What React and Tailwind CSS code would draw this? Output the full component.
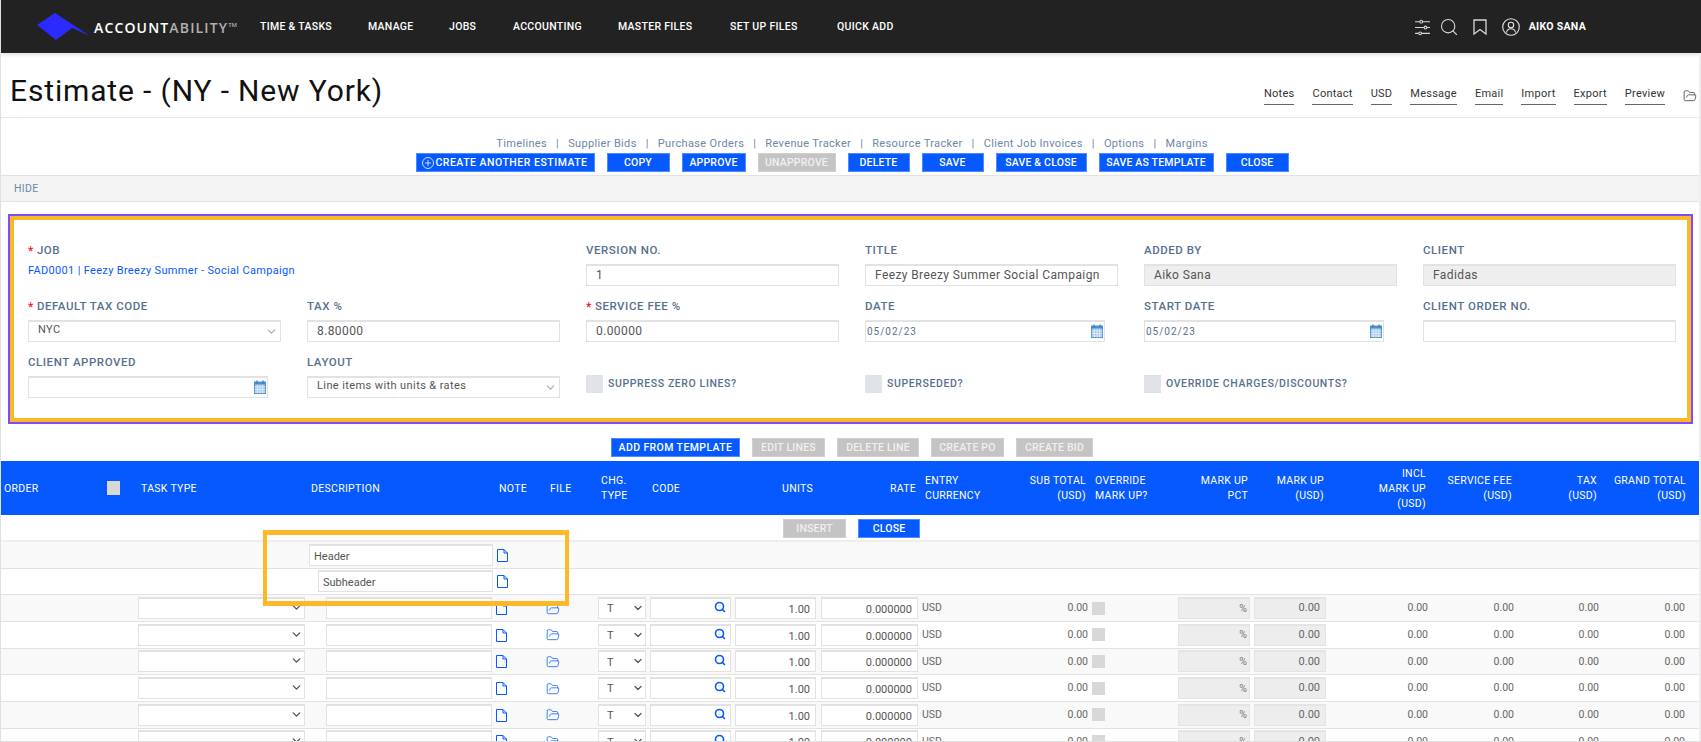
import { ChevronDown, FolderOpen, Search } from "lucide-react"

const navItems = [
  ["TIME & TASKS", "w-[108px]"],
  ["MANAGE", "w-[81px]"],
  ["JOBS", "w-[64px]"],
  ["ACCOUNTING", "w-[105px]"],
  ["MASTER FILES", "w-[112px]"],
  ["SET UP FILES", "w-[107px]"],
  ["QUICK ADD", "w-[70px]"],
]
const pageLinks = ["Notes", "Contact", "USD", "Message", "Email", "Import", "Export", "Preview"]
const subLinks = ["Timelines", "Supplier Bids", "Purchase Orders", "Revenue Tracker", "Resource Tracker", "Client Job Invoices", "Options", "Margins"]

const gridCols = "grid grid-cols-[106px_31px_171px_185px_52px_52px_52px_85px_85px_100px_70px_100px_88px_74px_76px_102px_86px_84px_99px]"

const Logo = () => (
  <svg viewBox="0 0 54 28" className="w-[54px] h-[28px] flex-none">
    <polygon points="0,12 18,0 53,23 35,15 19,27" fill="#2b2bff" />
  </svg>
)

const Sliders = () => (
  <svg viewBox="0 0 16 16" className="w-[17px] h-[17px]" fill="none" stroke="#d8d8d8" strokeWidth="1">
    <path d="M1 2.500h4.500M8 2.500h7M1 8h8.500M12 8h3M1 13.500h3.500M7 13.500h8" />
    <circle cx="6.800" cy="2.500" r="1.300" />
    <circle cx="10.800" cy="8" r="1.300" />
    <circle cx="5.800" cy="13.500" r="1.300" />
  </svg>
)

const Bookmark = () => (
  <svg viewBox="0 0 16 16" className="w-[16px] h-[16px]" fill="none" stroke="#d8d8d8" strokeWidth="1.300">
    <path d="M2 1h12v14l-6-4.500L2 15z" />
  </svg>
)

const UserCircle = () => (
  <svg viewBox="0 0 18 18" className="w-[18px] h-[18px]" fill="none" stroke="#e4e4e4" strokeWidth="1.100">
    <circle cx="9" cy="9" r="8.300" />
    <circle cx="9" cy="7" r="2.700" />
    <path d="M4.500 14.500c.4-2.600 2-3.800 4.500-3.800s4.100 1.200 4.500 3.800" />
  </svg>
)

const CalendarIcon = () => (
  <svg viewBox="0 0 12 14" className="w-[12px] h-[14px] block">
    <rect x="0.500" y="2" width="11" height="11.500" fill="#9cc3ea" stroke="#4a90d2" />
    <rect x="0.500" y="2" width="11" height="2.500" fill="#4a90d2" />
    <path d="M3 0.500v3M9 0.500v3" stroke="#3c78b4" strokeWidth="1.200" />
    <path d="M0.500 7h11M0.500 9.500h11M0.500 12h11M3.300 4.500v9M6 4.500v9M8.700 4.500v9" stroke="#fff" strokeWidth="0.600" />
  </svg>
)

const NoteIcon = () => (
  <svg viewBox="0 0 11 13" className="w-[11px] h-[13px] mt-[1px]" fill="none" stroke="#0559ff" strokeWidth="1">
    <path d="M0.500 0.500h6.500l3.500 3.500v8.500h-10zM7 0.500v3.500h3.500" />
  </svg>
)

const Btn = ({ children, w, off }) => (
  <button className={`${w} h-[19px] flex-none flex items-center justify-center text-[10.5px] font-medium tracking-[0.2px] border ${off ? "bg-[#c4c4c4] border-[#d0d0d0] text-[#f0f0f0]" : "bg-[#0559ff] border-[#4f8aff] text-white"}`}>
    {children}
  </button>
)

const Label = ({ children, req }) => (
  <div className="h-[16px] pt-[1px] flex items-center text-[11.5px] font-medium tracking-[0.55px] text-[#58708f]">
    {req && <span className="text-[#ee1c25] mr-[3px] text-[12px]">*</span>}
    {children}
  </div>
)

// block so padding moves the text and not the whole box
const boxCls = "block h-[22px] border border-[#e2e2e2] border-t-2 bg-white px-[9px] text-[11px] text-[#555] outline-none"
const cellCls = `${boxCls} pt-[2px]`

const Field = ({ label, req, value, gray, w = "w-[253px]" }) => (
  <div>
    <Label req={req}>{label}</Label>
    <input
      readOnly
      defaultValue={value}
      className={`mt-[6px] ${w} ${boxCls} pb-[2px] !text-[12px] tracking-[0.4px] ${gray ? "!bg-[#eeeeee]" : ""}`}
    />
  </div>
)

const SelectField = ({ label, req, value }) => (
  <div>
    <Label req={req}>{label}</Label>
    <div className="relative mt-[6px] w-[253px]">
      <select className={`w-full appearance-none ${boxCls} pb-[2px] tracking-[0.4px]`} defaultValue={value}>
        <option>{value}</option>
      </select>
      <ChevronDown className="absolute right-[3px] top-[5px] w-[13px] h-[13px] text-[#aaa]" />
    </div>
  </div>
)

const DateField = ({ label, value }) => (
  <div>
    <Label>{label}</Label>
    <div className="relative mt-[6px] w-[240px]">
      <input readOnly defaultValue={value} className={`w-full ${boxCls} pb-[1px] !px-[1px] !text-[10px] tracking-[1px] !text-[#58708f]`} />
      <span className="absolute right-[2px] top-[4px]"><CalendarIcon /></span>
    </div>
  </div>
)

const CheckField = ({ label }) => (
  <div className="pt-[21px] flex items-start gap-[5px]">
    <span className="w-[17px] h-[18px] bg-[#e0e4e9] flex-none" />
    <span className="h-[18px] flex items-center text-[10.5px] font-medium tracking-[0.6px] text-[#58708f]">{label}</span>
  </div>
)

const HeadCell = ({ lines, right, className = "" }) => (
  <div className={`flex flex-col justify-center leading-[15px] ${right ? "items-end" : "items-start"} ${className}`}>
    {lines.map((l) => <span key={l} className="whitespace-nowrap">{l}</span>)}
  </div>
)

const Amount = ({ className = "" }) => (
  <div className={`flex items-center justify-end text-[10.5px] text-[#666] ${className}`}>0.00</div>
)

const LineRow = ({ odd }) => (
  <div className={`${gridCols} h-[26.67px] border-b border-[#e2e2e2] items-center ${odd ? "bg-[#f9f9f9]" : "bg-white"}`}>
    <div />
    <div />
    <div className="relative w-[167px]">
      <select className={`w-full appearance-none ${cellCls}`}><option></option></select>
      <ChevronDown className="absolute right-[2px] top-[4px] w-[13px] h-[13px] text-[#555]" strokeWidth={2.5} />
    </div>
    <input readOnly className={`ml-[17px] w-[166px] ${cellCls}`} />
    <div className="pl-[2px] flex"><NoteIcon /></div>
    <div className="flex"><FolderOpen className="mt-[1px] w-[14px] h-[14px] text-[#0559ff]" strokeWidth={1.3} /></div>
    <div className="relative w-[48px]">
      <select className={`w-full appearance-none ${cellCls} !px-[8px]`}><option>T</option></select>
      <ChevronDown className="absolute right-[2px] top-[5px] w-[12px] h-[12px] text-[#555]" strokeWidth={2.5} />
    </div>
    <div className="relative w-[81px]">
      <input readOnly className={`w-full ${cellCls}`} />
      <Search className="absolute right-[5px] top-[4px] w-[12px] h-[12px] text-[#0559ff]" strokeWidth={3.2} />
    </div>
    <input readOnly defaultValue="1.00" className={`w-[81px] text-right ${cellCls} !pr-[5px]`} />
    <input readOnly defaultValue="0.000000" className={`ml-[1px] w-[97px] text-right ${cellCls} !pr-[5px]`} />
    <div className="pl-[2px] text-[10.5px] text-[#666]">USD</div>
    <Amount className="pr-[2px]" />
    <div className="pl-[2px]"><div className="w-[13px] h-[13px] bg-[#d8d8d8]" /></div>
    <div className="w-[72px] h-[22px] bg-[#ededed] border border-[#e4e4e4] border-t-2 flex items-center justify-end pr-[2px] text-[10.5px] text-[#777]">%</div>
    <div className="ml-[2px] w-[72px] h-[22px] bg-[#ededed] border border-[#e4e4e4] border-t-2 flex items-center justify-end pr-[5px] text-[11px] text-[#666]">0.00</div>
    <Amount className="pr-[2px]" />
    <Amount className="pr-[2px]" />
    <Amount className="pr-[1px]" />
    <Amount className="pr-[14px]" />
  </div>
)

const App = () => {
  return (
    <div className="relative w-[1701px] h-[742px] overflow-hidden bg-white border-l border-b border-[#e0e0e0] pr-[2px] font-['Roboto','Noto_Sans',sans-serif]">
      {/* Top nav */}
      <div className="h-[53px] w-[1700px] bg-[#222222] flex items-center pl-[36px] pt-[1px] shadow-[0_2px_4px_rgba(0,0,0,0.12)] text-white">
        <Logo />
        <div className="ml-[3px] w-[166px] flex-none font-['Open_Sans',sans-serif] font-semibold text-[14px] tracking-[1.15px] whitespace-nowrap">
          ACCOUNT<span className="text-[#b0b0b0]">ABILITY</span><span className="text-[6px] align-[6px] tracking-normal text-[#b0b0b0]">TM</span>
        </div>
        {navItems.map(([name, w]) => (
          <div key={name} className={`${w} flex-none text-[10.5px] font-medium tracking-[0.3px] whitespace-nowrap`}>{name}</div>
        ))}
        <div className="ml-auto flex items-center pr-[115px]">
          <Sliders />
          <Search className="ml-[8px] w-[20px] h-[20px] text-[#d8d8d8]" strokeWidth={1.3} />
          <span className="ml-[13px]"><Bookmark /></span>
          <span className="ml-[14px]"><UserCircle /></span>
          <span className="ml-[9px] text-[10.5px] font-bold tracking-[0.3px]">AIKO SANA</span>
        </div>
      </div>

      {/* Title */}
      <div className="h-[65px] border-b border-[#e6e6e6] flex items-center pl-[9px] pt-[10px]">
        <h1 className="text-[30px] tracking-[0.85px] text-[#111] font-normal">Estimate - (NY - New York)</h1>
        <div className="ml-auto flex items-center gap-[18px] pr-[2px] pt-[11px]">
          {pageLinks.map((l) => (
            <span key={l} className="text-[11px] tracking-[0.25px] text-[#333] border-b border-[#666] pb-[3px] leading-[14px]">{l}</span>
          ))}
          <FolderOpen className="w-[14px] h-[14px] text-[#444]" strokeWidth={1.4} />
        </div>
      </div>

      {/* Links and actions */}
      <div className="h-[57px] pt-[18px] pl-[4px]">
        <div className="h-[16px] flex items-center justify-center text-[11px] tracking-[0.35px] text-[#6d86a8]">
          {subLinks.map((l, i) => (
            <span key={l} className="flex items-center">
              {i > 0 && <span className="mx-[9px] text-[#6d86a8]">|</span>}
              {l}
            </span>
          ))}
        </div>
        <div className="mt-[1px] flex justify-center gap-[12px]">
          <Btn w="w-[179px]">
            <svg viewBox="0 0 12 12" className="w-[12px] h-[12px] mr-[1px]" fill="none" stroke="#fff" strokeWidth="0.800">
              <circle cx="6" cy="6" r="5.500" />
              <path d="M6 3v6M3 6h6" />
            </svg>
            <span className="tracking-[0.5px]">CREATE ANOTHER ESTIMATE</span>
          </Btn>
          <Btn w="w-[63px]">COPY</Btn>
          <Btn w="w-[64px]">APPROVE</Btn>
          <Btn w="w-[78px]" off>UNAPPROVE</Btn>
          <Btn w="w-[62px]">DELETE</Btn>
          <Btn w="w-[62px]">SAVE</Btn>
          <Btn w="w-[91px]">SAVE &amp; CLOSE</Btn>
          <Btn w="w-[115px]">SAVE AS TEMPLATE</Btn>
          <Btn w="w-[63px]">CLOSE</Btn>
        </div>
      </div>

      {/* Hide bar */}
      <div className="h-[27px] bg-[#f4f4f4] border-y border-[#e2e2e2] flex items-center pl-[13px] pt-[1px] text-[10.5px] tracking-[0.3px] text-[#6d86a8]">HIDE</div>

      {/* Highlighted form */}
      <div className="mt-[12px] ml-[7px] w-[1685px] h-[210px] border-2 border-[#7c4dff]">
        <div className="h-full border-[4px] border-[#fdb827] pl-[14px] pt-[22px]">
          <div className="grid grid-cols-[repeat(6,279px)] grid-rows-[repeat(3,56px)]">
            <div className="col-span-2">
              <Label req>JOB</Label>
              <div className="mt-[7px] text-[11px] leading-[12px] tracking-[0.33px] text-[#0559ff]">FAD0001 | Feezy Breezy Summer - Social Campaign</div>
            </div>
            <Field label="VERSION NO." value="1" />
            <Field label="TITLE" value="Feezy Breezy Summer Social Campaign" />
            <Field label="ADDED BY" value="Aiko Sana" gray />
            <Field label="CLIENT" value="Fadidas" gray />

            <SelectField label="DEFAULT TAX CODE" value="NYC" req />
            <Field label="TAX %" value="8.80000" />
            <Field label="SERVICE FEE %" value="0.00000" req />
            <DateField label="DATE" value="05/02/23" />
            <DateField label="START DATE" value="05/02/23" />
            <Field label="CLIENT ORDER NO." value="" />

            <DateField label="CLIENT APPROVED" value="" />
            <SelectField label="LAYOUT" value="Line items with units & rates" />
            <CheckField label="SUPPRESS ZERO LINES?" />
            <CheckField label="SUPERSEDED?" />
            <CheckField label="OVERRIDE CHARGES/DISCOUNTS?" />
          </div>
        </div>
      </div>

      {/* Line actions */}
      <div className="mt-[14px] h-[19px] flex justify-center gap-[12px] pl-[4px]">
        <Btn w="w-[129px]"><span className="tracking-[0.4px]">ADD FROM TEMPLATE</span></Btn>
        <Btn w="w-[73px]" off>EDIT LINES</Btn>
        <Btn w="w-[82px]" off>DELETE LINE</Btn>
        <Btn w="w-[73px]" off>CREATE PO</Btn>
        <Btn w="w-[77px]" off>CREATE BID</Btn>
      </div>

      {/* Table */}
      <div className={`${gridCols} mt-[4px] h-[54px] bg-[#0559ff] text-white text-[10.5px] tracking-[0.3px]`}>
        <HeadCell lines={["ORDER"]} className="pl-[3px]" />
        <div className="flex items-center"><span className="w-[13px] h-[14px] bg-[#d8d8d8]" /></div>
        <HeadCell lines={["TASK TYPE"]} className="pl-[3px]" />
        <HeadCell lines={["DESCRIPTION"]} className="pl-[2px]" />
        <HeadCell lines={["NOTE"]} className="pl-[5px]" />
        <HeadCell lines={["FILE"]} className="pl-[4px]" />
        <HeadCell lines={["CHG.", "TYPE"]} className="pl-[3px]" />
        <HeadCell lines={["CODE"]} className="pl-[2px]" />
        <HeadCell lines={["UNITS"]} right className="pr-[7px]" />
        <HeadCell lines={["RATE"]} right className="pr-[4px]" />
        <HeadCell lines={["ENTRY", "CURRENCY"]} className="pl-[5px]" />
        <HeadCell lines={["SUB TOTAL", "(USD)"]} right className="pr-[4px]" />
        <HeadCell lines={["OVERRIDE", "MARK UP?"]} className="pl-[5px]" />
        <HeadCell lines={["MARK UP", "PCT"]} right className="pr-[4px]" />
        <HeadCell lines={["MARK UP", "(USD)"]} right className="pr-[4px]" />
        <HeadCell lines={["INCL", "MARK UP", "(USD)"]} right className="pr-[4px]" />
        <HeadCell lines={["SERVICE FEE", "(USD)"]} right className="pr-[4px]" />
        <HeadCell lines={["TAX", "(USD)"]} right className="pr-[3px]" />
        <HeadCell lines={["GRAND TOTAL", "(USD)"]} right className="pr-[13px]" />
      </div>
      <div className="h-[27px] border-b-2 border-[#eeeeee] flex pt-[4px] pl-[782px] gap-[12px]">
        <Btn w="w-[63px]" off>INSERT</Btn>
        <Btn w="w-[62px]">CLOSE</Btn>
      </div>
      <div className="h-[26.67px] bg-[#f9f9f9] border-b border-[#e2e2e2] flex items-center pl-[308px]">
        <input readOnly defaultValue="Header" className={`w-[184px] ${cellCls} !pl-[4px]`} />
        <span className="ml-[4px] flex"><NoteIcon /></span>
      </div>
      <div className="h-[26.67px] bg-white border-b border-[#e2e2e2] flex items-center pl-[317px]">
        <input readOnly defaultValue="Subheader" className={`w-[175px] ${cellCls} !pl-[4px]`} />
        <span className="ml-[4px] flex"><NoteIcon /></span>
      </div>
      {[true, false, true, false, true, false].map((odd, i) => <LineRow key={i} odd={odd} />)}

      {/* Yellow annotation over the header rows */}
      <div className="absolute left-[262px] top-[530px] w-[306px] h-[76px] border-x-[4px] border-y-[5px] border-[#fdb827]" />
      <div className="absolute right-0 top-[53px] bottom-0 w-[2px] bg-[#eeeeee]" />
    </div>
  )
}

export default App
